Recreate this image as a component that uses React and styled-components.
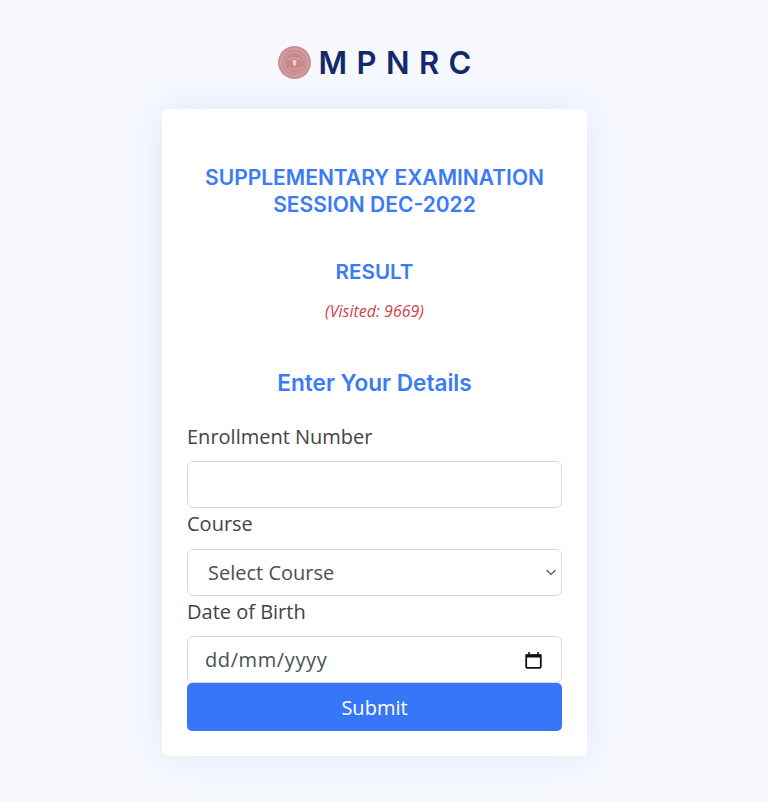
import React from 'react';
import styled, { createGlobalStyle } from 'styled-components';

const GlobalStyle = createGlobalStyle`
  html, body {
    margin: 0;
    padding: 0;
    background: #f7f9ff;
    font-family: "Open Sans", "Liberation Sans", sans-serif;
  }
  * { box-sizing: border-box; }
`;

const Page = styled.div`
  width: 749px;
  min-height: 802px;
  padding-top: 43px;
  display: flex;
  flex-direction: column;
  align-items: center;
`;

const Brand = styled.div`
  height: 38px;
  display: flex;
  align-items: center;
  gap: 8px;
  margin-bottom: 28px;
`;

const BrandName = styled.span`
  font-family: Inter, "Open Sans", sans-serif;
  font-size: 31px;
  font-weight: 600;
  letter-spacing: 9.4px;
  margin-right: -9.4px;
  color: #12296b;
`;

const Card = styled.main`
  width: 425px;
  height: 647px;
  padding: 55px 25px 25px;
  background: #fff;
  border-radius: 6px;
  box-shadow: 0 0 40px rgba(82, 113, 190, 0.14);
`;

const Heading = styled.h2`
  margin: ${(p) => p.$top || 0}px 0 ${(p) => p.$bottom || 0}px;
  font-family: Inter, "Open Sans", sans-serif;
  font-size: ${(p) => p.$size}px;
  font-weight: 600;
  line-height: 27px;
  text-align: center;
  color: #3a7bf6;
`;

const Visits = styled.p`
  margin: 14px 0 0;
  height: 24px;
  font-size: 16px;
  font-style: italic;
  line-height: 24px;
  text-align: center;
  color: #cf3f4c;
`;

const Form = styled.form`
  display: flex;
  flex-direction: column;
`;

const Label = styled.label`
  display: block;
  padding-top: 3px;
  height: 28px;
  margin-bottom: 12.5px;
  font-size: 20px;
  line-height: 25px;
  color: #444;
`;

const Field = styled.div`
  position: relative;
  height: 47px;
  width: 100%;
  flex: none;
`;

const Input = styled.input`
  display: block;
  width: 100%;
  height: 100%;
  padding: 0 17px;
  background: #fff;
  border: 1.5px solid #d6d8de;
  border-radius: 6px;
  outline: none;
  font-family: inherit;
  font-size: 20px;
  letter-spacing: ${(p) => p.$spacing || 0}px;
  color: #495057;

  &::placeholder {
    color: #495057;
    opacity: 1;
  }
`;

const Select = styled.select`
  display: block;
  width: 100%;
  height: 100%;
  padding: 0 20px;
  appearance: none;
  background: #fff;
  border: 1.5px solid #d6d8de;
  border-radius: 6px;
  outline: none;
  font-family: inherit;
  font-size: 20px;
  color: #495057;
`;

const FieldIcon = styled.svg`
  position: absolute;
  top: 50%;
  right: ${(p) => p.$right}px;
  transform: translateY(-50%);
  pointer-events: none;
`;

const Submit = styled.button`
  display: block;
  width: 100%;
  height: 48px;
  border: 0;
  border-radius: 5px;
  background: #3777f7;
  color: #fff;
  font-family: inherit;
  font-size: 20px;
`;

const Seal = () => (
  <svg width="33" height="33" viewBox="0 0 33 33" aria-hidden="true">
    <circle cx="16.5" cy="16.5" r="16.5" fill="#cb8f93" />
    <circle cx="16.5" cy="16.5" r="13.5" fill="none" stroke="#dcb0b3" strokeWidth="1.4" strokeDasharray="1.5 1" />
    <circle cx="16.5" cy="16.5" r="10" fill="#c8868b" stroke="#d9a9ac" strokeWidth="0.7" />
    <path d="M9 15c3-4 12-4 15 0" fill="none" stroke="#dcb0b3" strokeWidth="0.9" />
    <path d="M14.5 14h4l-.5 4.5-1.5 2-1.5-2z" fill="#e8cfd1" />
    <path d="M10 21c3 3 10 3 13 0" fill="none" stroke="#dcb0b3" strokeWidth="0.9" />
  </svg>
);

const App = () => {
  return (
    <Page>
      <GlobalStyle />
      <Brand>
        <Seal />
        <BrandName>MPNRC</BrandName>
      </Brand>
      <Card>
        <Heading $size={21}>
          SUPPLEMENTARY EXAMINATION
          <br />
          SESSION DEC-2022
        </Heading>
        <Heading $size={20.6} $top={40}>RESULT</Heading>
        <Visits>(Visited: 9669)</Visits>
        <Heading $size={22.6} $top={46} $bottom={24.5}>Enter Your Details</Heading>
        <Form onSubmit={(e) => e.preventDefault()}>
          <Label htmlFor="enrollment">Enrollment Number</Label>
          <Field>
            <Input id="enrollment" type="text" />
          </Field>
          <Label htmlFor="course">Course</Label>
          <Field>
            <Select id="course" defaultValue="">
              <option value="">Select Course</option>
            </Select>
            <FieldIcon $right={5} width="12" height="12" viewBox="0 0 12 12" fill="none" stroke="#555" strokeWidth="1.2">
              <path d="M1.5 4l4.5 4.5L10.5 4" />
            </FieldIcon>
          </Field>
          <Label htmlFor="dob">Date of Birth</Label>
          <Field>
            <Input id="dob" type="text" placeholder="dd/mm/yyyy" $spacing={0.6} />
            <FieldIcon $right={20} width="17" height="18" viewBox="0 0 17 18" fill="none">
              <path d="M1.2 4.5h14.6v11.3a1 1 0 0 1-1 1H2.2a1 1 0 0 1-1-1z" stroke="#111" strokeWidth="1.8" />
              <path d="M1 3.2h15v3.3H1z" fill="#111" />
              <path d="M4 1v2.5M13 1v2.5" stroke="#111" strokeWidth="1.6" />
            </FieldIcon>
          </Field>
          <Submit type="submit">Submit</Submit>
        </Form>
      </Card>
    </Page>
  );
};

export default App;
